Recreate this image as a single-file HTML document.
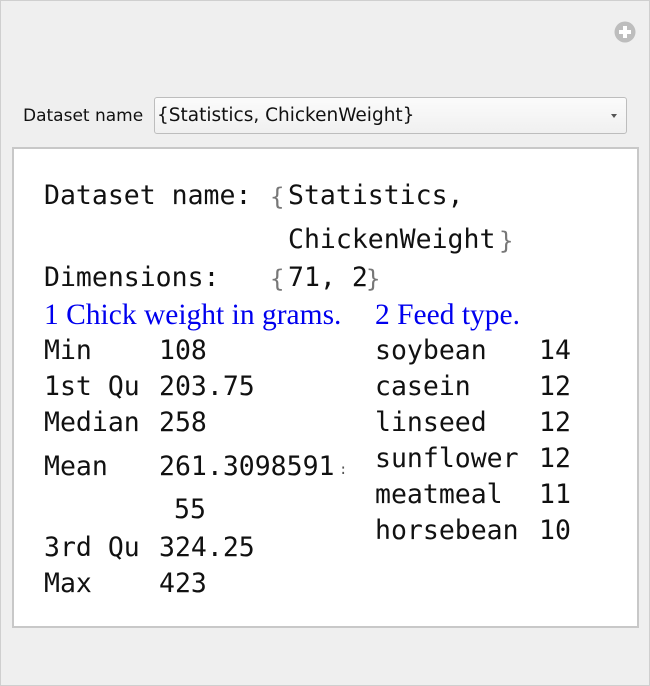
<!DOCTYPE html>
<html><head><meta charset="utf-8"><style>
body{margin:0;width:650px;height:686px;overflow:hidden;background:#fff}
.outer{position:absolute;left:0;top:0;width:648px;height:684px;background:#efefef;border:1px solid #cfcfcf}
.box{position:absolute;left:12px;top:147px;width:623px;height:477px;background:#fff;border:2px solid #c8c8c8}
.m{position:absolute;font-family:"DejaVu Sans Mono",monospace;font-size:26.5px;line-height:36px;color:#111;white-space:pre}
.s{position:absolute;font-family:"Liberation Serif",serif;font-size:29.5px;line-height:36px;color:#0000ee;white-space:pre}
.br{position:absolute;font-family:"DejaVu Sans Mono",monospace;font-size:24px;line-height:36px;color:#777;font-weight:200}
</style></head><body>
<div class="outer"></div>
<svg style="position:absolute;left:614px;top:21px" width="22" height="22"><circle cx="11" cy="11" r="10.5" fill="#bdbdbd"/><rect x="5" y="9" width="12" height="4" fill="#fff"/><rect x="9" y="5" width="4" height="12" fill="#fff"/></svg>
<div style="position:absolute;left:23px;top:106px;font-family:'DejaVu Sans',sans-serif;font-size:17px;color:#111">Dataset name</div>
<div style="position:absolute;left:154px;top:97px;width:471px;height:35px;background:linear-gradient(#fbfbfb,#f0f0f0);border:1px solid #bdbdbd;border-radius:3px"></div>
<div style="position:absolute;left:157px;top:105px;font-family:'DejaVu Sans',sans-serif;font-size:18.5px;color:#111">{Statistics, ChickenWeight}</div>
<div style="position:absolute;left:611px;top:114px;width:0;height:0;border-left:3px solid transparent;border-right:3px solid transparent;border-top:4px solid #555"></div>
<div class="box"></div>
<div class="m" style="left:44px;top:178px">Dataset name:</div>
<div class="br" style="left:270px;top:179px">{</div>
<div class="m" style="left:288px;top:178px">Statistics,</div>
<div class="m" style="left:288px;top:222px">ChickenWeight</div>
<div class="br" style="left:499px;top:223px">}</div>
<div class="m" style="left:44px;top:260px">Dimensions:</div>
<div class="br" style="left:270px;top:261px">{</div>
<div class="m" style="left:288px;top:260px">71, 2</div>
<div class="br" style="left:366px;top:261px">}</div>
<div class="s" style="left:44px;top:297px">1 Chick weight in grams.</div>
<div class="s" style="left:375px;top:297px">2 Feed type.</div>
<div class="m" style="left:44px;top:333px">Min
1st Qu
Median</div>
<div class="m" style="left:159px;top:333px">108
203.75
258</div>
<div class="m" style="left:44px;top:449px">Mean</div>
<div class="m" style="left:159px;top:449px">261.3098591</div>
<div class="m" style="left:339px;top:452px;font-size:14px;color:#555">:</div>
<div class="m" style="left:174px;top:492px">55</div>
<div class="m" style="left:44px;top:530px">3rd Qu
Max</div>
<div class="m" style="left:159px;top:530px">324.25
423</div>
<div class="m" style="left:375px;top:333px">soybean
casein
linseed
sunflower
meatmeal
horsebean</div>
<div class="m" style="left:539px;top:333px">14
12
12
12
11
10</div>
</body></html>
